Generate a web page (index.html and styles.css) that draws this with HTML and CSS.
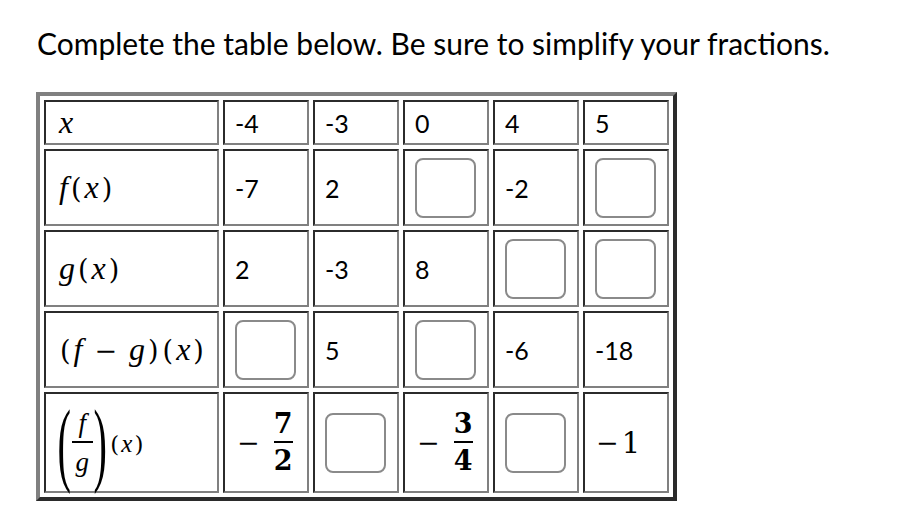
FILE: index.html
```html
<!DOCTYPE html>
<html>
<head>
<meta charset="utf-8">
<link rel="stylesheet" href="styles.css">
</head>
<body>
<p class="prompt">Complete the table below. Be sure to simplify your fractions.</p>
<table class="grid">
  <tr class="r-head">
    <td class="c-label"><span class="mi">x</span></td>
    <td>-4</td><td>-3</td><td>0</td><td>4</td><td>5</td>
  </tr>
  <tr class="r-mid">
    <td class="c-label"><span class="mi">f</span><span class="mo">(</span><span class="mi">x</span><span class="mo">)</span></td>
    <td>-7</td><td>2</td><td><span class="ans"></span></td><td>-2</td><td><span class="ans"></span></td>
  </tr>
  <tr class="r-mid">
    <td class="c-label"><span class="mi">g</span><span class="mo">(</span><span class="mi">x</span><span class="mo">)</span></td>
    <td>2</td><td>-3</td><td>8</td><td><span class="ans"></span></td><td><span class="ans"></span></td>
  </tr>
  <tr class="r-mid">
    <td class="c-label"><span class="mo">(</span><span class="mi">f</span><span class="op">−</span><span class="mi">g</span><span class="mo">)</span><span class="mo">(</span><span class="mi">x</span><span class="mo">)</span></td>
    <td><span class="ans"></span></td><td>5</td><td><span class="ans"></span></td><td>-6</td><td>-18</td>
  </tr>
  <tr class="r-frac">
    <td class="c-label">
      <span class="mathrow">
        <span class="bigparen">(</span>
        <span class="frac frac-fg"><span class="num mi">f</span><span class="bar bar-fg"></span><span class="den mi">g</span></span>
        <span class="bigparen">)</span>
        <span class="small-args"><span class="mo">(</span><span class="mi">x</span><span class="mo">)</span></span>
      </span>
    </td>
    <td><span class="mathrow"><span class="neg">−</span><span class="frac"><span class="num">7</span><span class="bar"></span><span class="den">2</span></span></span></td>
    <td><span class="ans"></span></td>
    <td><span class="mathrow"><span class="neg">−</span><span class="frac"><span class="num">3</span><span class="bar"></span><span class="den">4</span></span></span></td>
    <td><span class="ans"></span></td>
    <td><span class="mathrow"><span class="neg neg-one">−</span><span class="one">1</span></span></td>
  </tr>
</table>
</body>
</html>
```
FILE: styles.css
```css
html, body {
  margin: 0;
  padding: 0;
  background: #ffffff;
}
body {
  font-family: Lato, "DejaVu Sans", sans-serif;
  color: #000;
}
.prompt {
  margin: 0;
  padding: 25px 0 0 37px;
  font-size: 30px;
  line-height: 36px;
  height: 67px;
}
.grid {
  margin-left: 36px;
  border-collapse: separate;
  border-spacing: 4px;
  border-style: solid;
  border-width: 4px;
  border-color: #808080 #2b2b2b #2b2b2b #808080;
}
.grid td {
  border-style: solid;
  border-width: 2px;
  border-color: #2b2b2b #808080 #808080 #2b2b2b;
  padding: 0 0 0 10px;
  width: 72px;
  font-size: 25px;
  vertical-align: middle;
  text-align: left;
  white-space: nowrap;
}
.grid td.c-label {
  width: 159px;
  padding-left: 12px;
}
.r-head td { height: 41px; }
.r-mid td { height: 73px; }
.r-frac td { height: 97px; }

.mi {
  font-family: "Liberation Serif", serif;
  font-style: italic;
  font-size: 32px;
  margin: 0 1px;
}
.mo, .op, .neg, .one, .num, .den {
  font-family: "DejaVu Serif", serif;
  font-style: normal;
  font-size: 27px;
}
.mo {
  margin: 0 2px;
}
.op {
  margin: 0 11px;
}
.ans {
  display: block;
  width: 57px;
  height: 56px;
  border: 2px solid #8a8a8a;
  border-radius: 8px;
}
.mathrow {
  display: inline-flex;
  align-items: center;
}
.frac {
  display: inline-flex;
  flex-direction: column;
  align-items: center;
  margin: 0 2px;
}
.frac .num, .frac .den {
  line-height: 28px;
  font-size: 27px;
  font-weight: bold;
}
.frac-fg {
  margin: 0 1px;
}
.frac-fg .num, .frac-fg .den {
  font-weight: normal;
  font-size: 27px;
  line-height: 28px;
  font-family: "Liberation Serif", serif;
  font-style: italic;
}
.bar {
  display: block;
  width: 19px;
  height: 2px;
  background: #000;
  margin: 3px 0 4px;
}
.bar-fg {
  width: 21px;
  margin: 4px 0 5px;
}
.neg {
  margin-right: 12px;
  margin-left: 2px;
}
.neg-one {
  margin-right: 3px;
  margin-left: 1px;
}
.bigparen {
  font-family: "Liberation Serif", serif;
  font-size: 56px;
  line-height: 80px;
  transform: scale(0.72, 1.65);
  display: inline-block;
  margin: 0 -3px;
}
.small-args .mo {
  font-size: 23px;
  margin: 0 1px;
}
.small-args .mi {
  font-size: 25px;
}
.small-args {
  margin-left: 3px;
}
.one {
  font-size: 29px;
}
```
